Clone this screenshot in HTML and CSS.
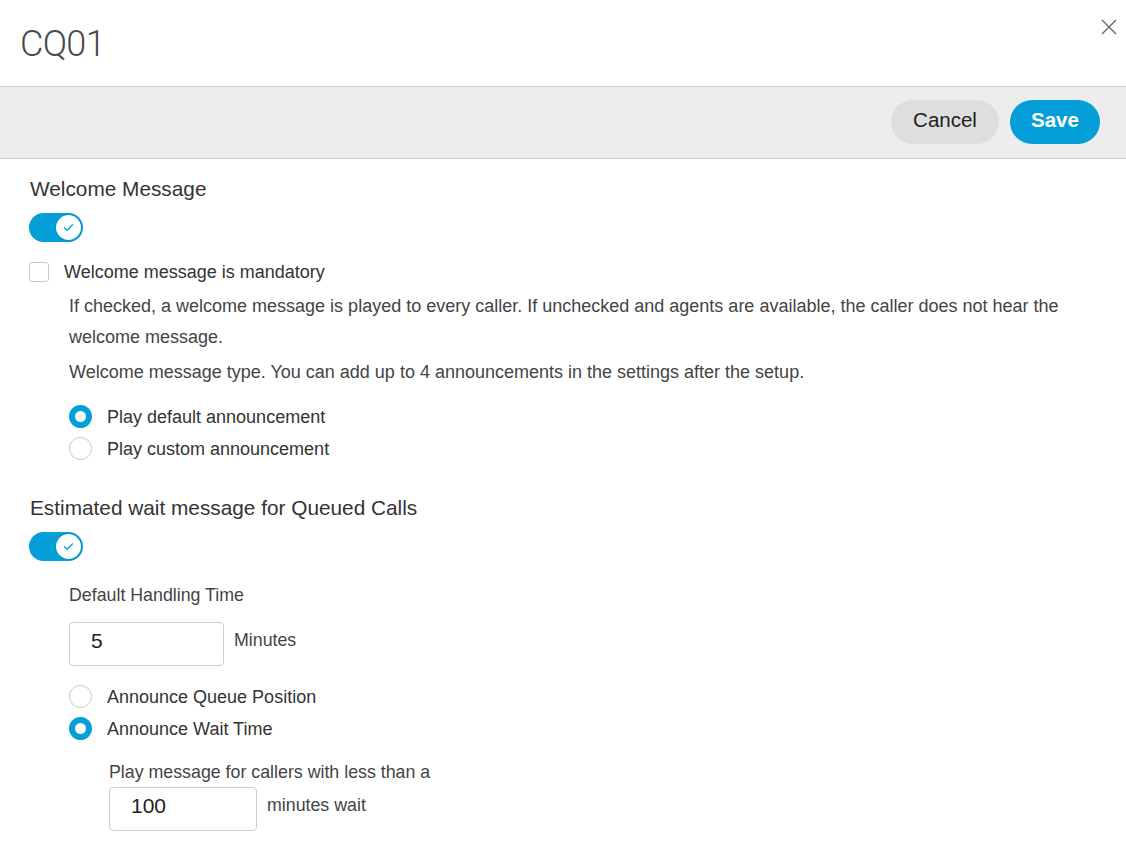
FILE: index.html
```html
<!DOCTYPE html>
<html>
<head>
<meta charset="utf-8">
<link rel="stylesheet" href="styles.css">
</head>
<body>
<div class="modal">
  <header class="head">
    <h1 class="title">CQ01</h1>
    <button class="close" aria-label="Close">
      <svg width="18" height="18" viewBox="0 0 18 18"><path d="M2 2L16 16M16 2L2 16" stroke="#666" stroke-width="1.4" fill="none"/></svg>
    </button>
  </header>
  <div class="bar">
    <button class="btn cancel">Cancel</button>
    <button class="btn save">Save</button>
  </div>
  <main class="body">
    <section class="section">
      <h2 class="sec-title">Welcome Message</h2>
      <div class="toggle"><span class="knob"><svg width="13" height="11" viewBox="0 0 13 11"><path d="M2.2 5.6L5 8.2L10.8 2.6" stroke="#049fd9" stroke-width="1.4" fill="none"/></svg></span></div>
      <label class="check-row"><span class="checkbox"></span><span class="check-label">Welcome message is mandatory</span></label>
      <div class="indent">
        <p class="desc">If checked, a welcome message is played to every caller. If unchecked and agents are available, the caller does not hear the welcome message.</p>
        <p class="desc type">Welcome message type. You can add up to 4 announcements in the settings after the setup.</p>
        <div class="radios">
          <div class="radio-row"><span class="radio on"></span><span class="radio-label">Play default announcement</span></div>
          <div class="radio-row"><span class="radio"></span><span class="radio-label">Play custom announcement</span></div>
        </div>
      </div>
    </section>
    <section class="section second">
      <h2 class="sec-title">Estimated wait message for Queued Calls</h2>
      <div class="toggle"><span class="knob"><svg width="13" height="11" viewBox="0 0 13 11"><path d="M2.2 5.6L5 8.2L10.8 2.6" stroke="#049fd9" stroke-width="1.4" fill="none"/></svg></span></div>
      <div class="indent">
        <div class="field-label">Default Handling Time</div>
        <div class="field-row">
          <div class="input w1">5</div>
          <span class="unit">Minutes</span>
        </div>
        <div class="radios r2">
          <div class="radio-row"><span class="radio"></span><span class="radio-label">Announce Queue Position</span></div>
          <div class="radio-row"><span class="radio on"></span><span class="radio-label">Announce Wait Time</span></div>
        </div>
        <div class="sub">
          <div class="field-label small">Play message for callers with less than a</div>
          <div class="field-row">
            <div class="input w2">100</div>
            <span class="unit">minutes wait</span>
          </div>
        </div>
      </div>
    </section>
  </main>
</div>
</body>
</html>
```
FILE: styles.css
```css
* { box-sizing: border-box; }
html, body { margin: 0; padding: 0; background: #fff; }
body { font-family: "Liberation Sans", Arial, sans-serif; color: #333; }
.modal { width: 1126px; height: 859px; overflow: hidden; }
.head { height: 87px; border-bottom: 1px solid #cfcfcf; position: relative; padding: 22px 0 0 20px; }
.title { margin: 0; font-family: Roboto, "Liberation Sans", sans-serif; font-weight: 300; font-size: 36px; line-height: 44px; color: #4a4a4a; letter-spacing: -0.7px; }
.close { position: absolute; right: 8px; top: 18px; border: 0; background: none; padding: 0; width: 18px; height: 18px; }
.bar { height: 72px; background: #ededed; border-bottom: 1px solid #cfcfcf; display: flex; justify-content: flex-end; align-items: center; gap: 11px; padding: 0 26px 2px 0; }
.btn { height: 44px; border: 0; border-radius: 22px; font-family: "Liberation Sans", Arial, sans-serif; font-size: 20.5px; line-height: 40px; padding: 0 0 4px; }
.cancel { width: 108px; background: #dedede; color: #222; }
.save { width: 90px; background: #049fd9; color: #fff; font-weight: bold; }
.body { padding: 18px 0 0 30px; }
.sec-title { margin: 0; font-size: 20.8px; font-weight: normal; line-height: 24px; color: #333; }
.toggle { width: 54px; height: 29px; border-radius: 15px; background: #049fd9; margin: 12px 0 0 -1px; position: relative; }
.knob { position: absolute; right: 2px; top: 2px; width: 25px; height: 25px; border-radius: 50%; background: #fff; box-shadow: 0 0 0 1px rgba(0,0,0,0.08); display: flex; align-items: center; justify-content: center; }
.check-row { display: flex; align-items: center; margin: 19px 0 0 -1px; }
.checkbox { width: 20px; height: 20px; border: 1px solid #c8c8c8; border-radius: 3px; background: #fff; }
.check-label { margin-left: 15px; font-size: 18px; line-height: 22px; color: #333; }
.indent { padding-left: 39px; }
.desc { margin: 8px 0 0; font-size: 18px; line-height: 31px; color: #444; max-width: 1010px; }
.desc.type { margin-top: 4px; }
.radios { margin-top: 17px; display: flex; flex-direction: column; gap: 9px; }
.radio-row { display: flex; align-items: center; height: 23px; }
.radio { width: 23px; height: 23px; border-radius: 50%; border: 1px solid #c8c8c8; background: #fff; }
.radio.on { border: 6px solid #049fd9; }
.radio-label { margin-left: 15px; font-size: 18px; line-height: 22px; color: #333; }
.second { margin-top: 36px; }
.field-label { margin-top: 24px; font-size: 17.8px; line-height: 20px; color: #444; }
.field-row { display: flex; align-items: flex-start; margin-top: 17px; }
.input { height: 44px; border: 1px solid #ccc; border-radius: 4px; padding-left: 21px; font-size: 21px; line-height: 36px; color: #222; }
.w1 { width: 155px; }
.w2 { width: 148px; }
.unit { margin-left: 10px; font-size: 17.8px; line-height: 20px; padding-top: 8px; color: #444; }
.radios.r2 { margin-top: 19px; }
.sub { padding-left: 40px; }
.field-label.small { margin-top: 22px; }
.sub .field-row { margin-top: 5px; }
```
